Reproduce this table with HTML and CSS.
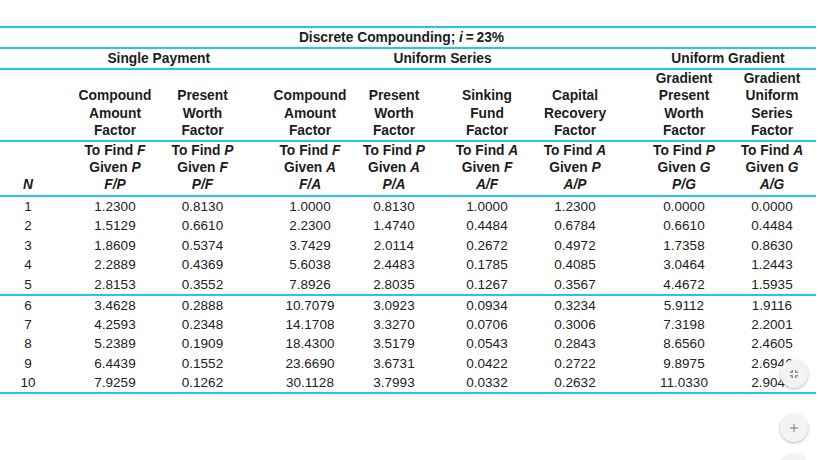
FILE: index.html
```html
<!DOCTYPE html>
<html>
<head>
<meta charset="utf-8">
<link rel="stylesheet" href="styles.css">
</head>
<body>
<div class="table">
  <div class="title">Discrete Compounding; <i>i</i>&#8201;=&#8201;23%</div>
  <div class="grid groups">
    <div class="g-sp">Single Payment</div>
    <div class="g-us">Uniform Series</div>
    <div class="g-ug">Uniform Gradient</div>
  </div>
  <div class="grid cols names">
    <div></div>
    <div>Compound<br>Amount<br>Factor</div>
    <div>Present<br>Worth<br>Factor</div>
    <div>Compound<br>Amount<br>Factor</div>
    <div>Present<br>Worth<br>Factor</div>
    <div>Sinking<br>Fund<br>Factor</div>
    <div>Capital<br>Recovery<br>Factor</div>
    <div>Gradient<br>Present<br>Worth<br>Factor</div>
    <div>Gradient<br>Uniform<br>Series<br>Factor</div>
  </div>
  <div class="grid cols finds">
    <div><i>N</i></div>
    <div>To Find <i>F</i><br>Given <i>P</i><br><i>F/P</i></div>
    <div>To Find <i>P</i><br>Given <i>F</i><br><i>P/F</i></div>
    <div>To Find <i>F</i><br>Given <i>A</i><br><i>F/A</i></div>
    <div>To Find <i>P</i><br>Given <i>A</i><br><i>P/A</i></div>
    <div>To Find <i>A</i><br>Given <i>F</i><br><i>A/F</i></div>
    <div>To Find <i>A</i><br>Given <i>P</i><br><i>A/P</i></div>
    <div>To Find <i>P</i><br>Given <i>G</i><br><i>P/G</i></div>
    <div>To Find <i>A</i><br>Given <i>G</i><br><i>A/G</i></div>
  </div>
  <div class="grid cols data">
    <div>1</div><div>1.2300</div><div>0.8130</div><div>1.0000</div><div>0.8130</div><div>1.0000</div><div>1.2300</div><div>0.0000</div><div>0.0000</div>
    <div>2</div><div>1.5129</div><div>0.6610</div><div>2.2300</div><div>1.4740</div><div>0.4484</div><div>0.6784</div><div>0.6610</div><div>0.4484</div>
    <div>3</div><div>1.8609</div><div>0.5374</div><div>3.7429</div><div>2.0114</div><div>0.2672</div><div>0.4972</div><div>1.7358</div><div>0.8630</div>
    <div>4</div><div>2.2889</div><div>0.4369</div><div>5.6038</div><div>2.4483</div><div>0.1785</div><div>0.4085</div><div>3.0464</div><div>1.2443</div>
    <div>5</div><div>2.8153</div><div>0.3552</div><div>7.8926</div><div>2.8035</div><div>0.1267</div><div>0.3567</div><div>4.4672</div><div>1.5935</div>
  </div>
  <div class="grid cols data data-2">
    <div>6</div><div>3.4628</div><div>0.2888</div><div>10.7079</div><div>3.0923</div><div>0.0934</div><div>0.3234</div><div>5.9112</div><div>1.9116</div>
    <div>7</div><div>4.2593</div><div>0.2348</div><div>14.1708</div><div>3.3270</div><div>0.0706</div><div>0.3006</div><div>7.3198</div><div>2.2001</div>
    <div>8</div><div>5.2389</div><div>0.1909</div><div>18.4300</div><div>3.5179</div><div>0.0543</div><div>0.2843</div><div>8.6560</div><div>2.4605</div>
    <div>9</div><div>6.4439</div><div>0.1552</div><div>23.6690</div><div>3.6731</div><div>0.0422</div><div>0.2722</div><div>9.8975</div><div>2.6946</div>
    <div>10</div><div>7.9259</div><div>0.1262</div><div>30.1128</div><div>3.7993</div><div>0.0332</div><div>0.2632</div><div>11.0330</div><div>2.9040</div>
  </div>
</div>

<div class="fab fab-1" title="Exit full screen">
  <svg viewBox="0 0 24 24" width="14" height="14"><path d="M5 16h3v3h2v-5H5v2zm3-8H5v2h5V5H8v3zm6 11h2v-3h3v-2h-5v5zm2-11V5h-2v5h5V8h-3z"/></svg>
</div>
<div class="fab fab-2" title="Zoom in">
  <svg viewBox="0 0 24 24" width="14" height="14"><path d="M11.25 5h1.5v6.25H19v1.5h-6.25V19h-1.5v-6.25H5v-1.5h6.25z"/></svg>
</div>
<div class="fab fab-3"></div>
</body>
</html>
```

FILE: styles.css
```css
body {
  margin: 0;
  background: #ffffff;
  font-family: "Liberation Sans", Arial, sans-serif;
  color: #1c1c1c;
}

.table {
  margin-top: 26px;
  width: 816px;
  border-top: 2px solid #27c3f3;
}

.title {
  height: 19px;
  line-height: 19px;
  text-align: center;
  font-weight: bold;
  font-size: 13.8px;
  padding-right: 13px;
  border-bottom: 2px solid #27c3f3;
}

.grid {
  display: grid;
  grid-template-columns: 56px 19px 80px 7.5px 80px 27.5px 80px 4px 80px 13px 80px 8px 80px 29px 80px 8px 80px 4px;
  border-bottom: 2px solid #27c3f3;
  text-align: center;
}

.groups {
  height: 19px;
  line-height: 19px;
  font-weight: bold;
  font-size: 13.8px;
}
.g-sp { grid-column: 3 / 6; }
.g-us { grid-column: 7 / 14; }
.g-ug { grid-column: 15 / 18; }

.cols > :nth-child(9n+1) { grid-column: 1; }
.cols > :nth-child(9n+2) { grid-column: 3; }
.cols > :nth-child(9n+3) { grid-column: 5; }
.cols > :nth-child(9n+4) { grid-column: 7; }
.cols > :nth-child(9n+5) { grid-column: 9; }
.cols > :nth-child(9n+6) { grid-column: 11; }
.cols > :nth-child(9n+7) { grid-column: 13; }
.cols > :nth-child(9n+8) { grid-column: 15; }
.cols > :nth-child(9n+9) { grid-column: 17; }

.names, .finds {
  font-weight: bold;
  font-size: 13.8px;
  line-height: 17.2px;
  align-items: end;
  box-sizing: border-box;
  padding-bottom: 1px;
}
.names { height: 72px; }
.finds { height: 55px; padding-bottom: 1.4px; }

.data {
  grid-auto-rows: 19.4px;
  font-size: 13.5px;
  line-height: 19.4px;
  color: #222222;
}
.data-2 {
  grid-auto-rows: 19.2px;
  line-height: 19.2px;
}

.fab {
  position: fixed;
  right: 11px;
  width: 28px;
  height: 28px;
  border-radius: 50%;
  background: #f3f3f3;
  box-shadow: 0 1px 3px rgba(0, 0, 0, 0.28);
  display: flex;
  align-items: center;
  justify-content: center;
  fill: #6e6e6e;
}
.fab-1 { top: 360px; }
.fab-2 { top: 414px; }
.fab-3 { top: 454px; }
```
